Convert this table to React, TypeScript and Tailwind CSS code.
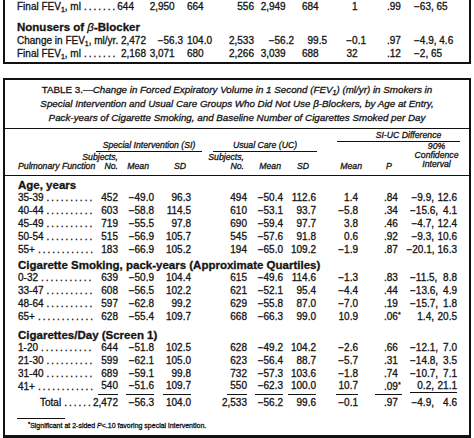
import React from "react";

const SANS = "font-['Liberation_Sans',Arial,sans-serif]";
const BOLD = "font-bold font-['Liberation_Sans_Narrow','Arial_Narrow','Liberation_Sans',sans-serif]";
const ITAL = "italic font-['Liberation_Sans',Arial,sans-serif]";
const COLS = "grid grid-cols-[76px_24px_36px_37px_56px_36px_33px_42px_52px_47px]";
const TOP_COLS = "grid grid-cols-[108px_21px_37px_29px_42px_40px_33px_39px_44px_59px]";

const dots = (n: number) => ". ".repeat(n).trim();

type Row = { label: string; n: number; v: string[]; ci: [string, string] };

const age: Row[] = [
  { label: "35-39", n: 10, v: ["452", "−49.0", "96.3", "494", "−50.4", "112.6", "1.4", ".84"], ci: ["−9.9,", "12.6"] },
  { label: "40-44", n: 10, v: ["603", "−58.8", "114.5", "610", "−53.1", "93.7", "−5.8", ".34"], ci: ["−15.6,", "4.1"] },
  { label: "45-49", n: 10, v: ["719", "−55.5", "97.8", "690", "−59.4", "97.7", "3.8", ".46"], ci: ["−4.7,", "12.4"] },
  { label: "50-54", n: 10, v: ["515", "−56.9", "105.7", "545", "−57.6", "91.8", "0.6", ".92"], ci: ["−9.3,", "10.6"] },
  { label: "55+", n: 12, v: ["183", "−66.9", "105.2", "194", "−65.0", "109.2", "−1.9", ".87"], ci: ["−20.1,", "16.3"] },
];

const packYears: Row[] = [
  { label: "0-32", n: 11, v: ["639", "−50.9", "104.4", "615", "−49.6", "114.6", "−1.3", ".83"], ci: ["−11.5,", "8.8"] },
  { label: "33-47", n: 10, v: ["608", "−56.5", "102.2", "621", "−52.1", "95.4", "−4.4", ".44"], ci: ["−13.6,", "4.9"] },
  { label: "48-64", n: 10, v: ["597", "−62.8", "99.2", "629", "−55.8", "87.0", "−7.0", ".19"], ci: ["−15.7,", "1.8"] },
  { label: "65+", n: 12, v: ["628", "−55.4", "109.7", "668", "−66.3", "99.0", "10.9", ".06*"], ci: ["1.4,", "20.5"] },
];

const perDay: Row[] = [
  { label: "1-20", n: 11, v: ["644", "−51.8", "102.5", "628", "−49.2", "104.2", "−2.6", ".66"], ci: ["−12.1,", "7.0"] },
  { label: "21-30", n: 10, v: ["599", "−62.1", "105.0", "623", "−56.4", "88.7", "−5.7", ".31"], ci: ["−14.8,", "3.5"] },
  { label: "31-40", n: 10, v: ["689", "−59.1", "99.8", "732", "−57.3", "103.6", "−1.8", ".74"], ci: ["−10.7,", "7.1"] },
];

function Fev() {
  return (
    <>
      FEV<sub className="text-[7px]">1</sub>
    </>
  );
}

function Val({ s }: { s: string }) {
  if (s.endsWith("*")) {
    return (
      <>
        {s.slice(0, -1)}
        <span className="relative -top-[3px] text-[7px]">*</span>
      </>
    );
  }
  return <>{s}</>;
}

// integers get an invisible ".0" so they line up on the decimal point
function Dec({ s }: { s: string }) {
  if (s.includes(".")) return <>{s}</>;
  return (
    <>
      {s}
      <span className="opacity-0">.0</span>
    </>
  );
}

function Leader({ n }: { n: number }) {
  return <span className="pl-[3px] tracking-[-0.4px]">{dots(n)}</span>;
}

function Num({ children, line = false }: { children: React.ReactNode; line?: boolean }) {
  return (
    <div className="flex justify-end">
      <span className={line ? "border-b border-[#111] leading-[12px] pl-[3px]" : ""}>{children}</span>
    </div>
  );
}

function DataRow({ row, line = false, indent = false }: { row: Row; line?: boolean; indent?: boolean }) {
  const [no, m, sd, uno, um, usd, dm, p] = row.v;
  return (
    <div className={`${COLS} h-[13px] leading-[13px] whitespace-nowrap`}>
      <div className="flex">
        <span className={indent ? "pl-[22px]" : ""}>{row.label}</span>
        <Leader n={row.n} />
      </div>
      <Num line={line}>{no}</Num>
      <Num line={line}>{m}</Num>
      <Num line={line}>{sd}</Num>
      <Num line={line}>{uno}</Num>
      <Num line={line}>{um}</Num>
      <Num line={line}>{usd}</Num>
      <Num line={line}>{dm}</Num>
      <div className="pl-[26px]">
        <span className={line ? "inline-block border-b border-[#111] leading-[12px] -ml-[9px] pl-[9px] pr-[1px]" : ""}>
          <Val s={p} />
        </span>
      </div>
      <div className={`flex justify-end gap-[3px] ${line ? "border-b border-[#111] h-[13px] leading-[12px]" : ""}`}>
        <span className="text-right">{row.ci[0]}</span>
        <span className="w-[20px] text-right">{row.ci[1]}</span>
      </div>
    </div>
  );
}

function Heading({ children, className = "" }: { children: React.ReactNode; className?: string }) {
  return <div className={`h-[12px] leading-[12px] text-[11.5px] whitespace-nowrap ${BOLD} ${className}`}>{children}</div>;
}

function TopRow({ label, v, ci, firstPad = false }: { label: React.ReactNode; v: string[]; ci: string; firstPad?: boolean }) {
  const [no, m, sd, uno, um, usd, dm, p] = v;
  return (
    <div className={`${TOP_COLS} h-[13px] leading-[13px] whitespace-nowrap`}>
      <div className="flex">{label}</div>
      <div className={`flex justify-end ${firstPad ? "pr-[12px]" : ""}`}>{no}</div>
      <div className="flex justify-end">
        <Dec s={m} />
      </div>
      <div className="flex justify-end">
        <Dec s={sd} />
      </div>
      <div className="flex justify-end">{uno}</div>
      <div className="flex justify-end">
        <Dec s={um} />
      </div>
      <div className="flex justify-end">
        <Dec s={usd} />
      </div>
      <div className="flex justify-end">
        <Dec s={dm} />
      </div>
      <div className="pl-[21px]">{p}</div>
      <div className="pl-[4px]">{ci}</div>
    </div>
  );
}

function FinalLabel({ n }: { n: number }) {
  return (
    <>
      <span>
        Final <Fev />, ml
      </span>
      <Leader n={n} />
    </>
  );
}

function TopBox() {
  return (
    <div className="ml-[3px] w-[468px] border-l-2 border-r-2 border-b-2 border-[#111] pl-[12px] pb-[2px]">
      <div className="h-[14px] leading-[14px]">
        <TopRow
          label={<FinalLabel n={7} />}
          v={["644", "2,950", "664", "556", "2,949", "684", "1", ".99"]}
          ci="−63, 65"
          firstPad
        />
      </div>
      <div className={`mt-[6px] h-[14px] leading-[14px] text-[11.5px] ${BOLD}`}>
        Nonusers of <span className={`${ITAL} font-normal`}>β</span>-Blocker
      </div>
      <TopRow
        label={
          <span>
            Change in <Fev />, ml/yr.
          </span>
        }
        v={["2,472", "−56.3", "104.0", "2,533", "−56.2", "99.5", "−0.1", ".97"]}
        ci="−4.9, 4.6"
      />
      <TopRow label={<FinalLabel n={7} />} v={["2,168", "3,071", "680", "2,266", "3,039", "688", "32", ".12"]} ci="−2, 65" />
    </div>
  );
}

function Header() {
  return (
    <div className={`${COLS} pt-[1px] pb-[4px] text-[8.7px] leading-[9px] whitespace-nowrap ${ITAL}`}>
      <div className="self-end">Pulmonary Function</div>

      <div className="col-span-3 self-end flex flex-col">
        <div className="ml-[2px] -mr-[11px] border-b border-[#111] pb-[1px] text-center leading-[10px]">
          Special Intervention (SI)
        </div>
        <div className="mt-[1px] grid grid-cols-[24px_36px_37px] items-end">
          <div className="flex flex-col items-end">
            <span>Subjects,</span>
            <span>No.</span>
          </div>
          <div className="text-right pr-[5px]">Mean</div>
          <div className="text-right pr-[5px]">SD</div>
        </div>
      </div>

      <div className="col-span-3 self-end flex flex-col">
        <div className="ml-[22px] -mr-[1px] border-b border-[#111] pb-[1px] text-center leading-[10px]">
          Usual Care (UC)
        </div>
        <div className="mt-[1px] grid grid-cols-[56px_36px_33px] items-end">
          <div className="flex flex-col items-end pr-[3px]">
            <span>Subjects,</span>
            <span>No.</span>
          </div>
          <div className="text-right pr-[2px]">Mean</div>
          <div className="text-right pr-[7px]">SD</div>
        </div>
      </div>

      <div className="col-span-3 self-end flex flex-col">
        <div className="ml-[21px] -mr-[3px] border-b border-[#111] pb-[1px] pl-[20px] text-center leading-[10px]">
          SI-UC Difference
        </div>
        <div className="grid h-[29px] grid-cols-[42px_52px_47px]">
          <div className="self-end text-right -mr-[4px]">Mean</div>
          <div className="self-end pl-[28px]">P</div>
          <div className="self-start flex flex-col items-center pl-[6px]">
            <span>90%</span>
            <span>Confidence</span>
            <span>Interval</span>
          </div>
        </div>
      </div>
    </div>
  );
}

function LowerBox() {
  return (
    <div className="mt-[14px] ml-[3px] w-[468px] border-l-2 border-r-2 border-t-2 border-b-[3px] border-[#111] pb-[4px]">
      <div className={`pt-[3px] pb-[3px] text-center text-[9.8px] leading-[14px] whitespace-nowrap ${ITAL}`}>
        <div>
          <span className="not-italic">TABLE 3.—</span>Change in Forced Expiratory Volume in 1 Second (<Fev />) (ml/yr) in
          Smokers in
        </div>
        <div>Special Intervention and Usual Care Groups Who Did Not Use β-Blockers, by Age at Entry,</div>
        <div>Pack-years of Cigarette Smoking, and Baseline Number of Cigarettes Smoked per Day</div>
      </div>

      <div className="border-t border-b border-[#111] pl-[13px]">
        <Header />
      </div>

      <div className="pl-[13px]">
        <Heading className="mt-[3px]">Age, years</Heading>
        {age.map((r) => (
          <DataRow key={r.label} row={r} />
        ))}

        <Heading className="mt-[3px]">Cigarette Smoking, pack-years (Approximate Quartiles)</Heading>
        {packYears.map((r) => (
          <DataRow key={r.label} row={r} />
        ))}

        <Heading className="mt-[6px]">Cigarettes/Day (Screen 1)</Heading>
        {perDay.map((r) => (
          <DataRow key={r.label} row={r} />
        ))}
        <DataRow
          line
          row={{ label: "41+", n: 12, v: ["540", "−51.6", "109.7", "550", "−62.3", "100.0", "10.7", ".09*"], ci: ["0.2,", "21.1"] }}
        />
        <div className="mt-[3px]">
          <DataRow
            indent
            row={{ label: "Total", n: 6, v: ["2,472", "−56.3", "104.0", "2,533", "−56.2", "99.6", "−0.1", ".97"], ci: ["−4.9,", "4.6"] }}
          />
        </div>

        <div className="mt-[9px] -ml-[1px] h-px w-[48px] bg-[#111]" />
        <div className="mt-[2px] pl-[10px] text-[7px] leading-[9px] whitespace-nowrap">
          <span className="relative -top-[2px] text-[5.5px]">*</span>Significant at 2-sided{" "}
          <span className={ITAL}>P</span>&lt;.10 favoring special intervention.
        </div>
      </div>
    </div>
  );
}

export default function App() {
  return (
    <div
      className={`h-[438px] w-[474px] overflow-hidden bg-white text-[10px] text-[#141414] [-webkit-text-stroke:0.3px_#141414] ${SANS}`}
    >
      <TopBox />
      <LowerBox />
    </div>
  );
}
